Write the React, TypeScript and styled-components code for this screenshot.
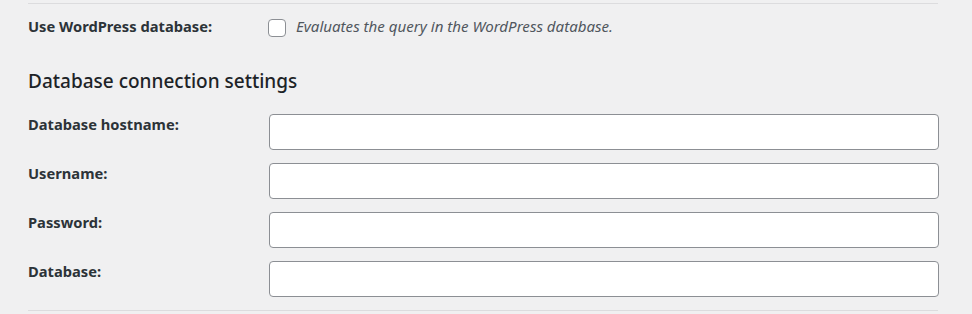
import React from "react";
import styled, { createGlobalStyle } from "styled-components";

const GlobalStyle = createGlobalStyle`
  html, body {
    margin: 0;
    padding: 0;
    background: #f0f0f1;
  }
  body {
    font-family: "Noto Sans", "Open Sans", "DejaVu Sans", sans-serif;
    color: #1d2327;
  }
`;

const Page = styled.div`
  padding-left: 28px;
  width: 910px;
  padding-top: 3px;
`;

const Divider = styled.div`
  border-top: 1px solid #dcdcde;
`;

const Row = styled.div`
  display: grid;
  grid-template-columns: 241px 1fr;
  align-items: start;
`;

const CheckRow = styled(Row)`
  padding-top: 12px;
`;

const Label = styled.label`
  font-size: 14.7px;
  line-height: 20px;
  font-weight: 700;
  color: #2c3338;
`;

const Field = styled.div`
  display: flex;
  align-items: flex-start;
  gap: 10px;
  margin-left: -1px;
`;

const Checkbox = styled.input.attrs({ type: "checkbox" })`
  appearance: none;
  margin: 3px 0 0;
  width: 18px;
  height: 18px;
  border: 1px solid #8c8f94;
  border-radius: 4px;
  background: #fff;
  box-sizing: border-box;
  flex: none;
`;

const Description = styled.span`
  font-size: 15.1px;
  line-height: 20px;
  font-style: italic;
  color: #50575e;
`;

const Heading = styled.h2`
  margin: 31px 0 20px;
  font-size: 19px;
  line-height: 26px;
  font-weight: 500;
  color: #1d2327;
`;

const Fields = styled.div`
  display: grid;
  row-gap: 13px;
  padding-bottom: 13px;
  border-bottom: 1px solid #dcdcde;
`;

const TextInput = styled.input.attrs({ type: "text" })`
  box-sizing: border-box;
  width: 670px;
  height: 36px;
  margin: 0;
  border: 1px solid #8c8f94;
  border-radius: 4px;
  background: #fff;
  padding: 0 9px;
  font-size: 15px;
  font-family: inherit;
`;

const fields = ["Database hostname:", "Username:", "Password:", "Database:"];

export default function App() {
  return (
    <>
      <GlobalStyle />
      <Page>
        <Divider />
        <CheckRow>
          <Label>Use WordPress database:</Label>
          <Field>
            <Checkbox />
            <Description>Evaluates the query in the WordPress database.</Description>
          </Field>
        </CheckRow>
        <Heading>Database connection settings</Heading>
        <Fields>
          {fields.map((f) => (
            <Row key={f}>
              <Label>{f}</Label>
              <TextInput />
            </Row>
          ))}
        </Fields>
      </Page>
    </>
  );
}
